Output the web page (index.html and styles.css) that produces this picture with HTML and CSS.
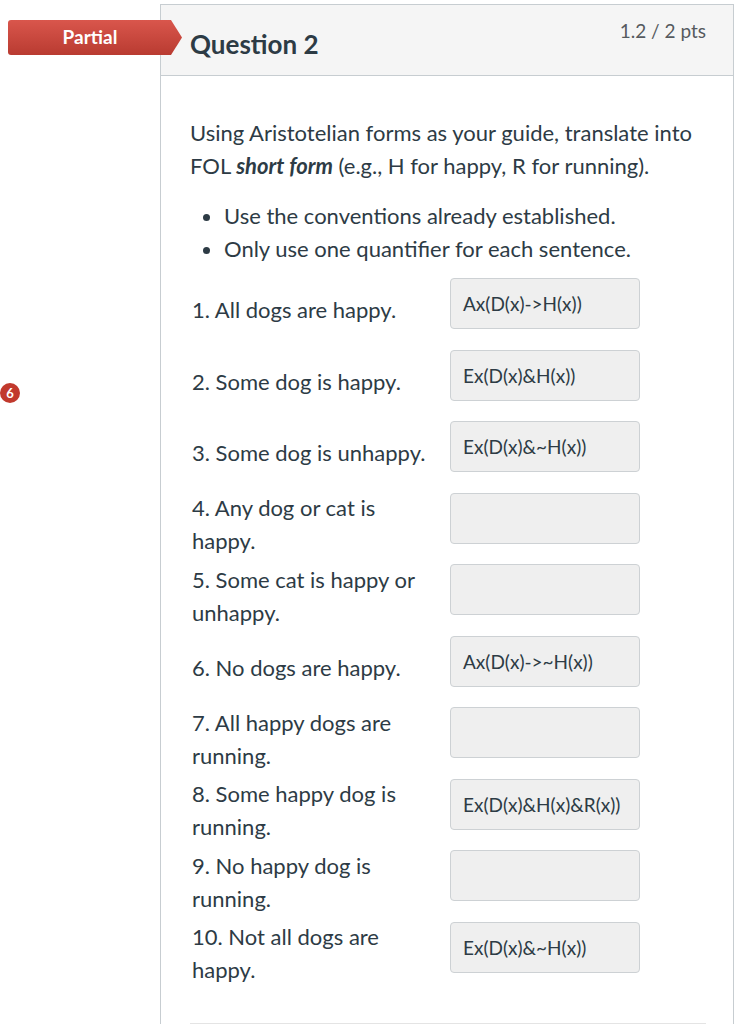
FILE: index.html
```html
<!DOCTYPE html>
<html>
<head>
<meta charset="utf-8">
<link rel="stylesheet" href="styles.css">
</head>
<body>
<div class="page">
  <div class="badge-partial">Partial</div>
  <div class="badge-num">6</div>
  <div class="card">
    <div class="card-header">
      <h2 class="title">Question 2</h2>
      <div class="pts">1.2 / 2 pts</div>
    </div>
    <div class="card-body">
      <p class="intro">Using Aristotelian forms as your guide, translate into FOL <b class="em">short form</b> (e.g., H for happy, R for running).</p>
      <ul class="rules">
        <li>Use the conventions already established.</li>
        <li>Only use one quantifier for each sentence.</li>
      </ul>
      <div class="rows">
        <div class="row"><div class="label">1. All dogs are happy.</div><div class="box">Ax(D(x)-&gt;H(x))</div></div>
        <div class="row"><div class="label">2. Some dog is happy.</div><div class="box">Ex(D(x)&amp;H(x))</div></div>
        <div class="row"><div class="label">3. Some dog is unhappy.</div><div class="box">Ex(D(x)&amp;~H(x))</div></div>
        <div class="row"><div class="label">4. Any dog or cat is happy.</div><div class="box"></div></div>
        <div class="row"><div class="label">5. Some cat is happy or unhappy.</div><div class="box"></div></div>
        <div class="row"><div class="label">6. No dogs are happy.</div><div class="box">Ax(D(x)-&gt;~H(x))</div></div>
        <div class="row"><div class="label">7. All happy dogs are running.</div><div class="box"></div></div>
        <div class="row"><div class="label">8. Some happy dog is running.</div><div class="box">Ex(D(x)&amp;H(x)&amp;R(x))</div></div>
        <div class="row"><div class="label">9. No happy dog is running.</div><div class="box"></div></div>
        <div class="row"><div class="label">10. Not all dogs are happy.</div><div class="box">Ex(D(x)&amp;~H(x))</div></div>
      </div>
      <div class="divider"></div>
    </div>
  </div>
</div>
</body>
</html>
```
FILE: styles.css
```css
html, body {
  margin: 0;
  padding: 0;
  background: #ffffff;
}
body {
  font-family: Lato, "Open Sans", sans-serif;
  color: #2d3b45;
  overflow: hidden;
}
.page {
  position: relative;
  width: 735px;
  height: 1024px;
  padding: 4px 1px 0 160px;
  box-sizing: border-box;
  overflow: hidden;
}
.badge-partial {
  position: absolute;
  left: 8px;
  top: 20px;
  width: 174px;
  height: 35px;
  box-sizing: border-box;
  padding-right: 10px;
  border-radius: 3px 0 0 3px;
  background: linear-gradient(#d9564c, #b93b31);
  clip-path: polygon(0 0, calc(100% - 11px) 0, 100% 50%, calc(100% - 11px) 100%, 0 100%);
  color: #fff;
  font-weight: 700;
  font-size: 19px;
  line-height: 34px;
  text-align: center;
  z-index: 2;
}
.badge-num {
  position: absolute;
  left: 0px;
  top: 383px;
  width: 20px;
  height: 20px;
  border-radius: 50%;
  background: #c1392d;
  color: #fff;
  font-size: 13px;
  font-weight: 700;
  line-height: 20px;
  text-align: center;
}
.card {
  border-left: 1px solid #c7cdd1;
  border-right: 1px solid #c7cdd1;
  border-top: 1px solid #c7cdd1;
  height: 100%;
  box-sizing: border-box;
}
.card-header {
  height: 71px;
  box-sizing: border-box;
  background: #f5f5f5;
  border-bottom: 1px solid #c7cdd1;
  display: flex;
  justify-content: space-between;
  align-items: flex-start;
  padding: 0 27px 0 29px;
}
.title {
  margin: 24px 0 0 0;
  font-size: 26px;
  font-weight: 700;
  line-height: 30px;
  color: #2d3b45;
}
.pts {
  margin-top: 15px;
  font-size: 19px;
  line-height: 22px;
  color: #555a5e;
}
.card-body {
  padding: 40px 27px 0 29px;
}
.intro {
  margin: 0;
  font-size: 22px;
  line-height: 33px;
}
.em {
  font-style: italic;
  font-weight: 700;
}
.rules {
  margin: 17px 0 3px 0;
  padding-left: 34px;
  font-size: 22px;
  line-height: 33px;
}
.rows {
  display: flex;
  flex-direction: column;
  margin-left: 2px;
}
.row {
  height: 71.5px;
  display: flex;
  align-items: center;
}
.label {
  width: 246px;
  padding-right: 12px;
  padding-top: 12px;
  font-size: 22px;
  line-height: 33px;
}
.box {
  width: 190px;
  height: 51px;
  box-sizing: border-box;
  background: #efefef;
  border: 1px solid #cdd1d4;
  border-radius: 4px;
  padding: 0 12px;
  font-size: 19px;
  line-height: 49px;
  color: #2d3b45;
  white-space: nowrap;
}
.divider {
  margin-top: 40px;
  height: 2px;
  background: #e4e4e4;
}
```
